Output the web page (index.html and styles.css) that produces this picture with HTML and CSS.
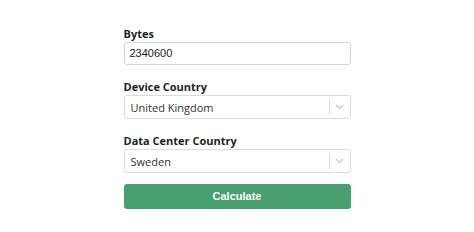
FILE: index.html
```
<!DOCTYPE html>
<html lang="en">
<head>
    <meta charset="UTF-8">
    <title>Calculator</title>
    <link rel="stylesheet" href="styles.css">
</head>
<body>
    <div class="form">
        <div class="field">
            <label class="field_label">Bytes</label>
            <div class="text_input">2340600</div>
        </div>
        <div class="field">
            <label class="field_label">Device Country</label>
            <div class="select">
                <span class="select_value">United Kingdom</span>
                <span class="select_sep"></span>
                <span class="select_arrow">
                    <svg width="9" height="6" viewBox="0 0 9 6"><path d="M1 1 L4.5 4.5 L8 1" fill="none" stroke="#c4c4c4" stroke-width="1.1"/></svg>
                </span>
            </div>
        </div>
        <div class="field">
            <label class="field_label">Data Center Country</label>
            <div class="select">
                <span class="select_value">Sweden</span>
                <span class="select_sep"></span>
                <span class="select_arrow">
                    <svg width="9" height="6" viewBox="0 0 9 6"><path d="M1 1 L4.5 4.5 L8 1" fill="none" stroke="#c4c4c4" stroke-width="1.1"/></svg>
                </span>
            </div>
        </div>
        <div class="calc_btn">Calculate</div>
    </div>
</body>
</html>
```
FILE: styles.css
```
*{
    padding: 0;
    margin: 0;
    box-sizing: border-box;
}
html,body{
    width: 100%;
    height: 100%;
    background-color: #fff;
}
body{
    font-family: "Open Sans", "Liberation Sans", sans-serif;
    color: #222;
}
.form{
    width: 227px;
    margin: 0 auto;
    padding-top: 26px;
}
.field{
    margin-bottom: 14px;
}
.field_label{
    display: block;
    font-size: 11px;
    font-weight: 700;
    line-height: 16px;
    color: #1f1f1f;
}
.text_input{
    height: 23px;
    border: 1px solid #d4d4d4;
    border-radius: 3px;
    padding: 0 5px;
    font-family: "Liberation Sans", Arial, sans-serif;
    font-size: 11px;
    line-height: 21px;
    color: #222;
}
.select{
    height: 24px;
    border: 1px solid #dcdcdc;
    border-radius: 3px;
    display: flex;
    align-items: center;
}
.select_value{
    flex: 1;
    padding-left: 6px;
    font-size: 11px;
    color: #333;
}
.select_sep{
    width: 1px;
    height: 15px;
    background-color: #dadada;
}
.select_arrow{
    width: 20px;
    display: flex;
    justify-content: center;
    align-items: center;
}
.calc_btn{
    height: 25px;
    margin-top: -3px;
    background-color: #48a071;
    border-radius: 3px;
    color: #fff;
    text-align: center;
    font-family: "Liberation Sans", Arial, sans-serif;
    font-weight: 700;
    font-size: 11px;
    line-height: 25px;
}
```
